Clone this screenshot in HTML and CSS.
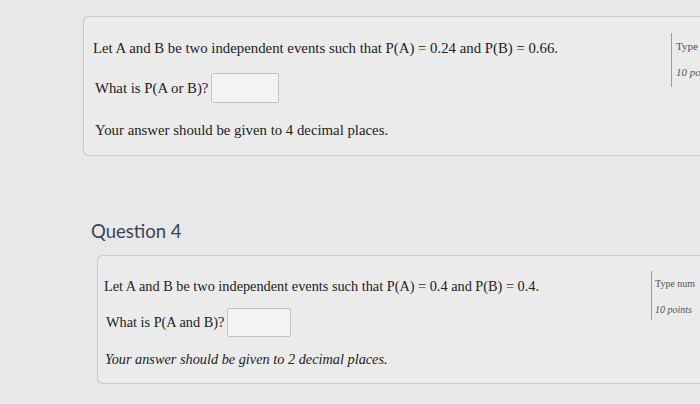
FILE: index.html
```html
<!DOCTYPE html>
<html>
<head>
<meta charset="utf-8">
<link rel="stylesheet" href="styles.css">
</head>
<body>
<div class="page">
  <div class="card card-a">
    <div class="main main-a">
      <p class="line">Let A and B be two independent events such that P(A) = 0.24 and P(B) = 0.66.</p>
      <div class="ask ask-a"><span>What is P(A or B)?</span><span class="box box-a"></span></div>
      <p class="line note-a">Your answer should be given to 4 decimal places.</p>
    </div>
    <div class="side side-a">
      <div class="type">Type</div>
      <div class="pts">10 points</div>
    </div>
  </div>

  <h2 class="qhead">Question 4</h2>

  <div class="card card-b">
    <div class="main main-b">
      <p class="line">Let A and B be two independent events such that P(A) = 0.4 and P(B) = 0.4.</p>
      <div class="ask ask-b"><span>What is P(A and B)?</span><span class="box box-b"></span></div>
      <p class="line note-b">Your answer should be given to 2 decimal places.</p>
    </div>
    <div class="side side-b">
      <div class="type">Type num</div>
      <div class="pts">10 points</div>
    </div>
  </div>
</div>
</body>
</html>
```
FILE: styles.css
```css
html, body {
  margin: 0;
  padding: 0;
  background: #e7e8e7;
  overflow: hidden;
}
.page {
  width: 700px;
  height: 404px;
  overflow: hidden;
  font-family: "Liberation Serif", "DejaVu Serif", serif;
  color: #222;
}
.card {
  display: flex;
  border: 1px solid #c9cac9;
  border-right: none;
  border-radius: 6px 0 0 6px;
  background: #eaebea;
  box-sizing: border-box;
}
.card-a {
  margin: 16px 0 0 83px;
  width: 700px;
  height: 140px;
}
.card-b {
  margin: 0 0 0 97px;
  width: 700px;
  height: 129px;
}
.main {
  box-sizing: border-box;
}
.main-a {
  width: 587px;
  padding: 20px 0 0 9px;
  font-size: 14.8px;
}
.main-b {
  width: 553px;
  padding: 19px 0 0 6px;
  font-size: 14.3px;
}
.line {
  margin: 0;
  line-height: 22px;
  white-space: nowrap;
}
.ask {
  display: flex;
  align-items: center;
  gap: 3px;
  padding-left: 2px;
}
.ask-a { margin-top: 14px; }
.ask-b { margin-top: 11px; }
.box {
  display: block;
  background: #f3f3f3;
  border: 1px solid #c3c3c3;
  border-radius: 2px;
}
.box-a { width: 66px; height: 28px; }
.box-b { width: 62px; height: 27px; }
.note-a { margin-top: 16px; padding-left: 2px; }
.note-b { margin-top: 11px; padding-left: 1px; font-style: italic; }
.side {
  border-left: 1px solid #9a9b9c;
  color: #555;
  white-space: nowrap;
  box-sizing: border-box;
}
.side-a {
  margin-top: 16px;
  height: 54px;
  padding: 6px 0 0 4px;
  font-size: 11px;
}
.side-b {
  margin-top: 15px;
  height: 49px;
  padding: 6px 0 0 3px;
  font-size: 10px;
}
.type { line-height: 14px; }
.side-a .pts { margin-top: 12px; font-style: italic; line-height: 14px; }
.side-b .pts { margin-top: 12px; font-style: italic; line-height: 14px; }
.qhead {
  margin: 63px 0 12px 91px;
  font-family: Lato, "Noto Sans", sans-serif;
  font-weight: 400;
  font-size: 18.5px;
  line-height: 24px;
  color: #34465a;
}
```
